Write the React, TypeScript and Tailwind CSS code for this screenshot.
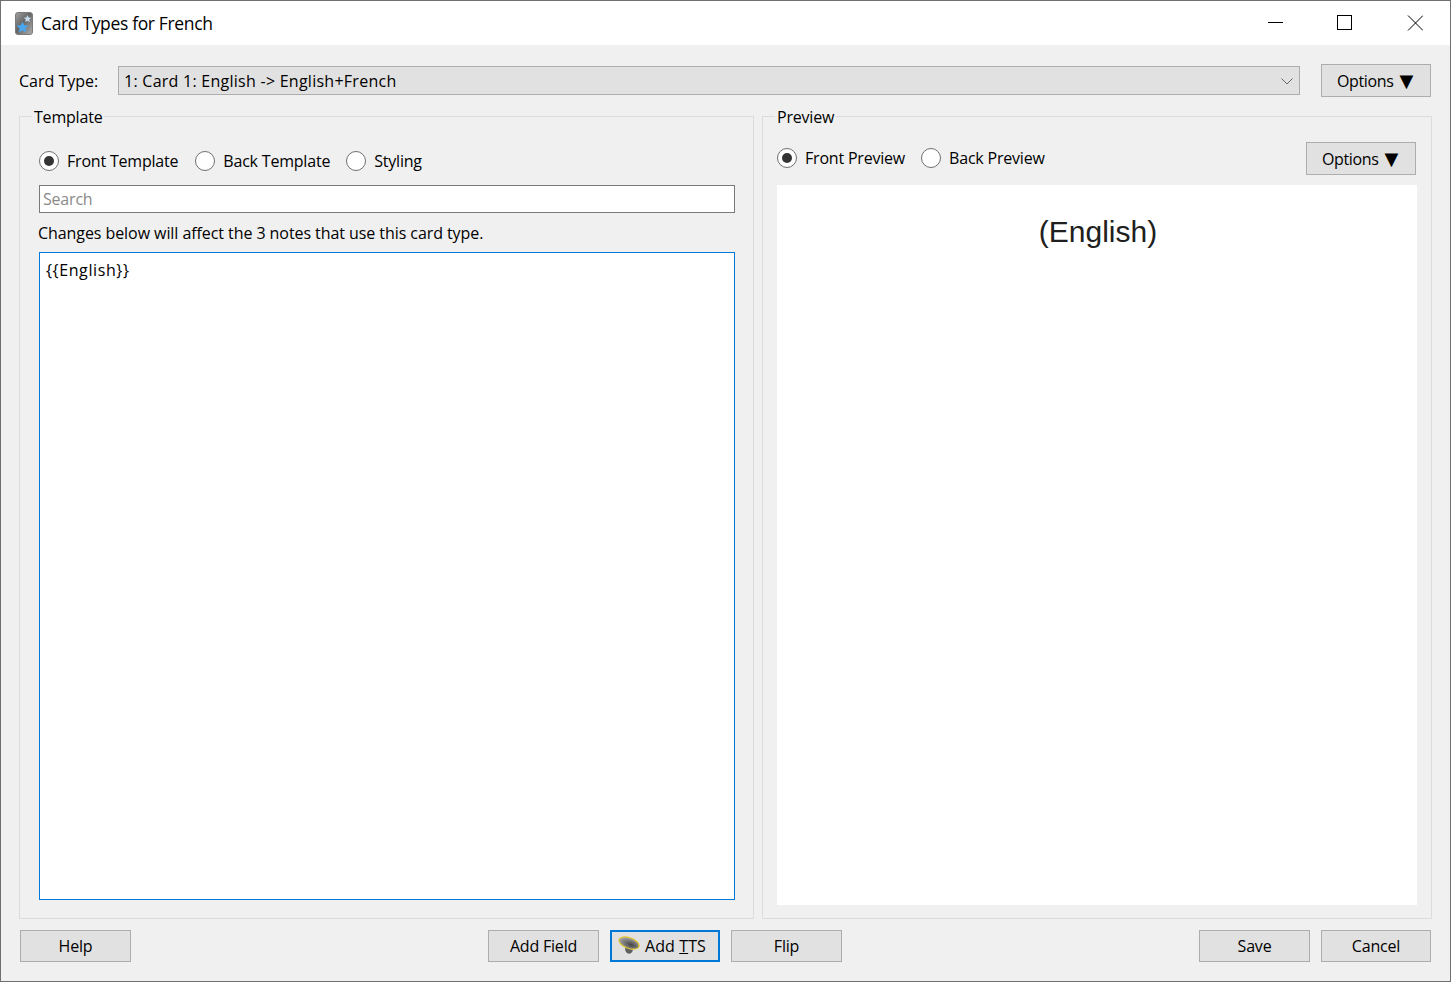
const font = { fontFamily: '"Open Sans", "Noto Sans", sans-serif' };

function AppIcon() {
  return (
    <svg width="18" height="23" viewBox="0 0 18 23" className="shrink-0">
      <defs>
        <linearGradient id="cardBg" x1="0" y1="0" x2="1" y2="1">
          <stop offset="0" stopColor="#a2a2a2" />
          <stop offset="0.45" stopColor="#666666" />
          <stop offset="1" stopColor="#b0b0b0" />
        </linearGradient>
      </defs>
      <rect x="0.5" y="0.5" width="17" height="22" rx="2.5" fill="url(#cardBg)" stroke="#7a7a7a" />
      <polygon
        points="12.5,3 13.6,5.6 16.2,5.8 14.2,7.5 14.8,10 12.5,8.7 10.2,10 10.8,7.5 8.8,5.8 11.4,5.6"
        fill="#c6dcf2"
      />
      <polygon
        points="7.5,9.5 9.3,13.2 13.4,13.6 10.4,16.4 11.2,20.4 7.5,18.4 3.8,20.4 4.6,16.4 1.6,13.6 5.7,13.2"
        fill="#4ba6ee"
      />
    </svg>
  );
}

function SpeakerIcon() {
  return (
    <svg width="24" height="20" viewBox="0 0 24 20" className="shrink-0">
      <defs>
        <radialGradient id="cone" cx="0.62" cy="0.6" r="0.75">
          <stop offset="0" stopColor="#444444" />
          <stop offset="0.6" stopColor="#858585" />
          <stop offset="1" stopColor="#bcbcbc" />
        </radialGradient>
      </defs>
      <path d="M8 12 L16 15 Q15 19 11 18.6 Q8 17.6 8 12 Z" fill="#5f5f5f" />
      <ellipse cx="12" cy="8" rx="11.2" ry="5.8" transform="rotate(20 12 8)" fill="#e0c62e" />
      <ellipse cx="12" cy="8" rx="10" ry="4.7" transform="rotate(20 12 8)" fill="url(#cone)" />
    </svg>
  );
}

function Radio({ label, checked, gap }: { label: string; checked?: boolean; gap?: string }) {
  return (
    <label className={`flex items-center gap-[8px] h-[20px] ${gap ?? ''}`}>
      <span className="w-[20px] h-[20px] rounded-full bg-white border border-[#6f6f6f] flex items-center justify-center shrink-0">
        {checked && <span className="w-[10px] h-[10px] rounded-full bg-[#333333]" />}
      </span>
      <span>{label}</span>
    </label>
  );
}

function Btn({ children, width }: { children: React.ReactNode; width: string }) {
  return (
    <button className={`${width} h-[32px] bg-[#e1e1e1] border border-[#adadad] flex items-center justify-center`}>
      {children}
    </button>
  );
}

function OptionsButton() {
  return (
    <button className="w-[110px] h-[33px] bg-[#e1e1e1] border border-[#adadad] flex items-center justify-center gap-[6px] pr-[2px] shrink-0">
      <span className="tracking-[-0.35px]">Options</span>
      <span className="text-[18px]" style={{ fontFamily: '"DejaVu Sans", sans-serif' }}>▼</span>
    </button>
  );
}

export default function App() {
  return (
    <div
      className="w-[1451px] h-[982px] border border-[#707070] bg-[#f0f0f0] flex flex-col text-[16px] leading-[20px] text-black tracking-[-0.2px] overflow-hidden"
      style={font}
    >
      {/* Title bar */}
      <div className="h-[44px] bg-white flex items-center justify-between shrink-0">
        <div className="flex items-center gap-[8px] pl-[14px] text-[17.5px] tracking-[-0.35px]">
          <AppIcon />
          <span>Card Types for French</span>
        </div>
        <div className="flex items-center">
          <div className="w-[70px] h-[44px] flex items-center justify-center">
            <svg width="16" height="16" viewBox="0 0 16 16">
              <path d="M1 7.5H16" stroke="#000" fill="none" />
            </svg>
          </div>
          <div className="w-[70px] h-[44px] flex items-center justify-center">
            <svg width="16" height="16" viewBox="0 0 16 16">
              <rect x="0.5" y="0.5" width="14" height="14" stroke="#000" fill="none" />
            </svg>
          </div>
          <div className="w-[70px] h-[44px] flex items-center justify-center">
            <svg width="16" height="16" viewBox="0 0 16 16">
              <path d="M1 0.5L16 15.5M16 0.5L1 15.5" stroke="#000" fill="none" />
            </svg>
          </div>
        </div>
      </div>

      {/* Card type row */}
      <div className="flex items-center pl-[18px] pr-[19px] pt-[19px] shrink-0">
        <span className="w-[99px] shrink-0 tracking-normal">Card Type:</span>
        <div className="flex-1 h-[29px] bg-[#e1e1e1] border border-[#adadad] flex items-center justify-between pl-[5px] pr-[5px]">
          <span className="tracking-[0.26px]">1: Card 1: English -&gt; English+French</span>
          <svg width="14" height="14" viewBox="0 0 14 14">
            <path d="M1.5 4.5L7 10L12.5 4.5" stroke="#666" fill="none" />
          </svg>
        </div>
        <div className="ml-[21px]">
          <OptionsButton />
        </div>
      </div>

      {/* Groups */}
      <div className="flex gap-[8px] pl-[18px] pr-[18px] mt-[19px] shrink-0">
        <div className="relative w-[735px] h-[803px] border border-[#dcdcdc] pl-[19px] pt-[34px] shrink-0">
          <span className="absolute left-[12px] top-[-10px] px-[2px] bg-[#f0f0f0]">Template</span>
          <div className="flex">
            <Radio label="Front Template" checked gap="mr-[17px]" />
            <Radio label="Back Template" gap="mr-[16px]" />
            <Radio label="Styling" />
          </div>
          <input
            placeholder="Search"
            className="mt-[14px] block w-[696px] h-[28px] bg-white border border-[#7a7a7a] px-[3px] outline-none placeholder:text-[#8a8a8a]"
          />
          <p className="mt-[10px] -ml-[1px] h-[20px] tracking-[-0.07px]">
            Changes below will affect the 3 notes that use this card type.
          </p>
          <textarea
            readOnly
            defaultValue="{{English}}"
            className="mt-[9px] block w-[696px] h-[648px] bg-white border border-[#0078d7] px-[6px] py-[7px] outline-none resize-none tracking-[0.6px]"
          />
        </div>

        <div className="relative flex-1 h-[803px] border border-[#dcdcdc] pl-[14px] pt-[25px]">
          <span className="absolute left-[12px] top-[-10px] px-[2px] bg-[#f0f0f0]">Preview</span>
          <div className="flex items-start justify-between w-[639px]">
            <div className="flex gap-[16px] pt-[6px]">
              <Radio label="Front Preview" checked />
              <Radio label="Back Preview" />
            </div>
            <OptionsButton />
          </div>
          <div className="mt-[10px] w-[640px] h-[720px] bg-white flex justify-center pt-[29px] pl-[2px]">
            <span
              className="text-[30px] leading-[36px] tracking-normal text-[#202020]"
              style={{ fontFamily: '"Liberation Sans", Arial, sans-serif' }}
            >
              (English)
            </span>
          </div>
        </div>
      </div>

      {/* Bottom buttons */}
      <div className="flex justify-between pl-[19px] pr-[19px] mt-[11px] shrink-0">
        <Btn width="w-[111px]">Help</Btn>
        <div className="flex gap-[11px]">
          <Btn width="w-[111px]">Add Field</Btn>
          <button className="w-[110px] h-[32px] bg-[#e1e1e1] border-2 border-[#0078d7] flex items-center gap-[4px] pl-[5px] tracking-[0.1px]">
            <span className="-mt-[3px]">
              <SpeakerIcon />
            </span>
            <span>
              Add <u>T</u>TS
            </span>
          </button>
          <Btn width="w-[111px]">Flip</Btn>
        </div>
        <div className="flex gap-[11px]">
          <Btn width="w-[111px]">Save</Btn>
          <Btn width="w-[110px]">Cancel</Btn>
        </div>
      </div>
    </div>
  );
}
